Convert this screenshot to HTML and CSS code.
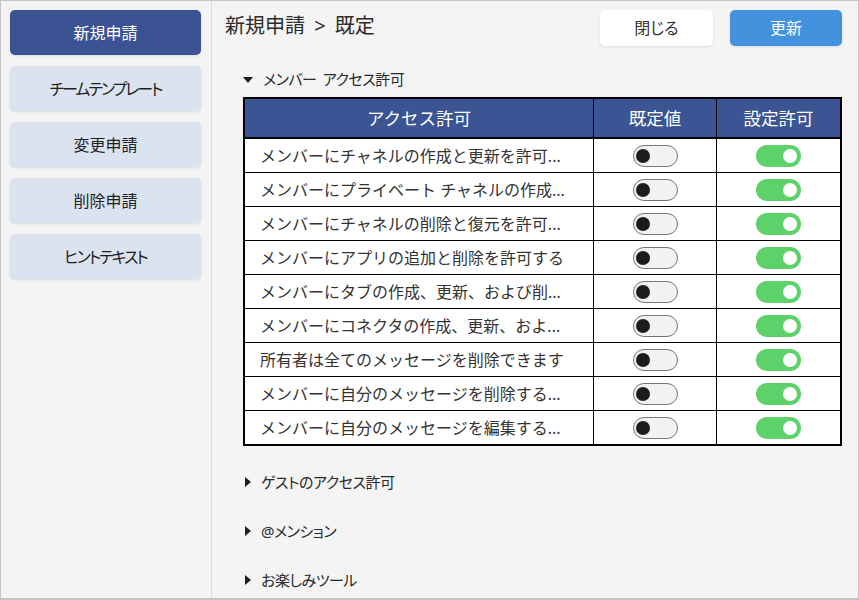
FILE: index.html
```html
<!DOCTYPE html>
<html lang="ja">
<head>
<meta charset="utf-8">
<title>新規申請 &gt; 既定</title>
<link rel="stylesheet" href="styles.css">
</head>
<body>
<div class="app">
  <nav class="sidebar">
    <button class="nav-btn active">新規申請</button>
    <button class="nav-btn kana">チームテンプレート</button>
    <button class="nav-btn">変更申請</button>
    <button class="nav-btn">削除申請</button>
    <button class="nav-btn kana">ヒントテキスト</button>
  </nav>
  <main class="main">
    <header class="topbar">
      <h1 class="crumb">新規申請 &gt; 既定</h1>
      <div class="actions">
        <button class="btn btn-close">閉じる</button>
        <button class="btn btn-update">更新</button>
      </div>
    </header>

    <section class="group">
      <div class="group-title"><span class="caret caret-down"></span>メンバー アクセス許可</div>
      <table class="perm">
        <thead>
          <tr><th class="c-name">アクセス許可</th><th class="c-def">既定値</th><th class="c-allow">設定許可</th></tr>
        </thead>
        <tbody>
          <tr><td class="name">メンバーにチャネルの作成と更新を許可...</td><td><span class="tg off"></span></td><td><span class="tg on"></span></td></tr>
          <tr><td class="name">メンバーにプライベート チャネルの作成...</td><td><span class="tg off"></span></td><td><span class="tg on"></span></td></tr>
          <tr><td class="name">メンバーにチャネルの削除と復元を許可...</td><td><span class="tg off"></span></td><td><span class="tg on"></span></td></tr>
          <tr><td class="name">メンバーにアプリの追加と削除を許可する</td><td><span class="tg off"></span></td><td><span class="tg on"></span></td></tr>
          <tr><td class="name">メンバーにタブの作成、更新、および削...</td><td><span class="tg off"></span></td><td><span class="tg on"></span></td></tr>
          <tr><td class="name">メンバーにコネクタの作成、更新、およ...</td><td><span class="tg off"></span></td><td><span class="tg on"></span></td></tr>
          <tr><td class="name">所有者は全てのメッセージを削除できます</td><td><span class="tg off"></span></td><td><span class="tg on"></span></td></tr>
          <tr><td class="name">メンバーに自分のメッセージを削除する...</td><td><span class="tg off"></span></td><td><span class="tg on"></span></td></tr>
          <tr><td class="name">メンバーに自分のメッセージを編集する...</td><td><span class="tg off"></span></td><td><span class="tg on"></span></td></tr>
        </tbody>
      </table>
    </section>

    <div class="group-title collapsed first"><span class="caret caret-right"></span>ゲストのアクセス許可</div>
    <div class="group-title collapsed"><span class="caret caret-right"></span>@メンション</div>
    <div class="group-title collapsed"><span class="caret caret-right"></span>お楽しみツール</div>
  </main>
</div>
</body>
</html>
```

FILE: styles.css
```css
html, body {
  margin: 0;
  padding: 0;
  background: #f4f4f4;
}

body {
  font-family: "Noto Sans", "Noto Sans CJK JP", sans-serif;
  color: #222;
}

.app {
  box-sizing: border-box;
  width: 859px;
  height: 600px;
  border: 1px solid #c4c4c4;
  border-bottom-width: 2px;
  display: flex;
  overflow: hidden;
  background: #f4f4f4;
}

/* Sidebar */
.sidebar {
  width: 191px;
  flex: none;
  padding: 9px 10px 0 9px;
  border-right: 1px solid #dcdcdc;
  display: flex;
  flex-direction: column;
  gap: 11px;
}

.nav-btn {
  font: inherit;
  font-feature-settings: "palt";
  font-size: 16px;
  line-height: 20px;
  width: 191px;
  height: 45px;
  border: none;
  border-radius: 5px;
  background: #dbe3f0;
  color: #1e1e1e;
  box-shadow: 0 1px 3px rgba(0, 0, 0, 0.10);
  padding: 0;
  cursor: pointer;
}

.nav-btn.kana {
  letter-spacing: -2px;
}

.nav-btn.active {
  background: #3b5393;
  color: #fff;
}

/* Main */
.main {
  flex: 1;
  padding: 9px 16px 0 13px;
  display: flex;
  flex-direction: column;
}

.topbar {
  display: flex;
  justify-content: space-between;
  align-items: center;
  height: 36px;
}

.crumb {
  margin: 0 0 4px 0;
  font-size: 20px;
  font-weight: normal;
  line-height: 26px;
  word-spacing: 4px;
  color: #2b2b2b;
}

.actions {
  display: flex;
  gap: 17px;
}

.btn {
  font: inherit;
  font-feature-settings: "palt";
  font-size: 16px;
  line-height: 20px;
  height: 36px;
  border: none;
  border-radius: 5px;
  padding: 0;
  cursor: pointer;
  box-shadow: 0 1px 3px rgba(0, 0, 0, 0.10);
}

.btn-close {
  width: 113px;
  background: #fff;
  color: #333;
}

.btn-update {
  width: 112px;
  background: #4491de;
  color: #fff;
}

/* Groups */
.group {
  margin-left: 18px;
}

.group-title {
  display: flex;
  align-items: center;
  height: 30px;
  font-size: 15px;
  line-height: 20px;
  font-feature-settings: "palt";
  letter-spacing: -0.5px;
  word-spacing: 3px;
  white-space: pre;
  color: #2a2a2a;
}

.group .group-title {
  margin-top: 18px;
}

.group-title.collapsed {
  margin-left: 18px;
  margin-top: 19px;
}

.group-title.collapsed.first {
  margin-top: 21px;
}

.caret {
  display: inline-block;
  width: 0;
  height: 0;
  margin-right: 10px;
}

.caret-down {
  border-left: 5px solid transparent;
  border-right: 5px solid transparent;
  border-top: 6px solid #1e1e1e;
  margin-top: 1px;
}

.caret-right {
  margin-left: 2px;
  border-top: 5px solid transparent;
  border-bottom: 5px solid transparent;
  border-left: 6px solid #1e1e1e;
}

/* Table */
.perm {
  margin-top: 3px;
  width: 599px;
  border-collapse: collapse;
  border: 2px solid #000;
  background: #fff;
  table-layout: fixed;
}

.perm th {
  background: #3b5493;
  color: #fff;
  font-weight: normal;
  font-size: 17.5px;
  line-height: 22px;
  height: 38px;
  padding: 0;
  border: 1px solid #000;
  border-bottom: 2px solid #000;
  text-align: center;
}

.perm .c-name { width: 348px; }
.perm .c-def { width: 122px; }
.perm .c-allow { width: auto; }

.perm td {
  border: 1px solid #000;
  height: 33px;
  padding: 0;
  text-align: center;
  vertical-align: middle;
}

.perm td.name {
  text-align: left;
  padding-left: 15px;
  font-size: 16px;
  line-height: 20px;
  color: #333;
  white-space: nowrap;
  overflow: hidden;
}

/* Toggles */
.tg {
  display: inline-block;
  position: relative;
  box-sizing: border-box;
  width: 45px;
  height: 22px;
  border-radius: 11px;
  vertical-align: middle;
}

.tg::after {
  content: "";
  position: absolute;
  top: 50%;
  width: 14px;
  height: 14px;
  margin-top: -7px;
  border-radius: 50%;
}

.tg.off {
  background: #f2f2f2;
  border: 1px solid #777;
}

.tg.off::after {
  left: 2px;
  background: #1c1c1c;
}

.tg.on {
  background: #5dd16a;
}

.tg.on::after {
  right: 4px;
  background: #fff;
}
```
